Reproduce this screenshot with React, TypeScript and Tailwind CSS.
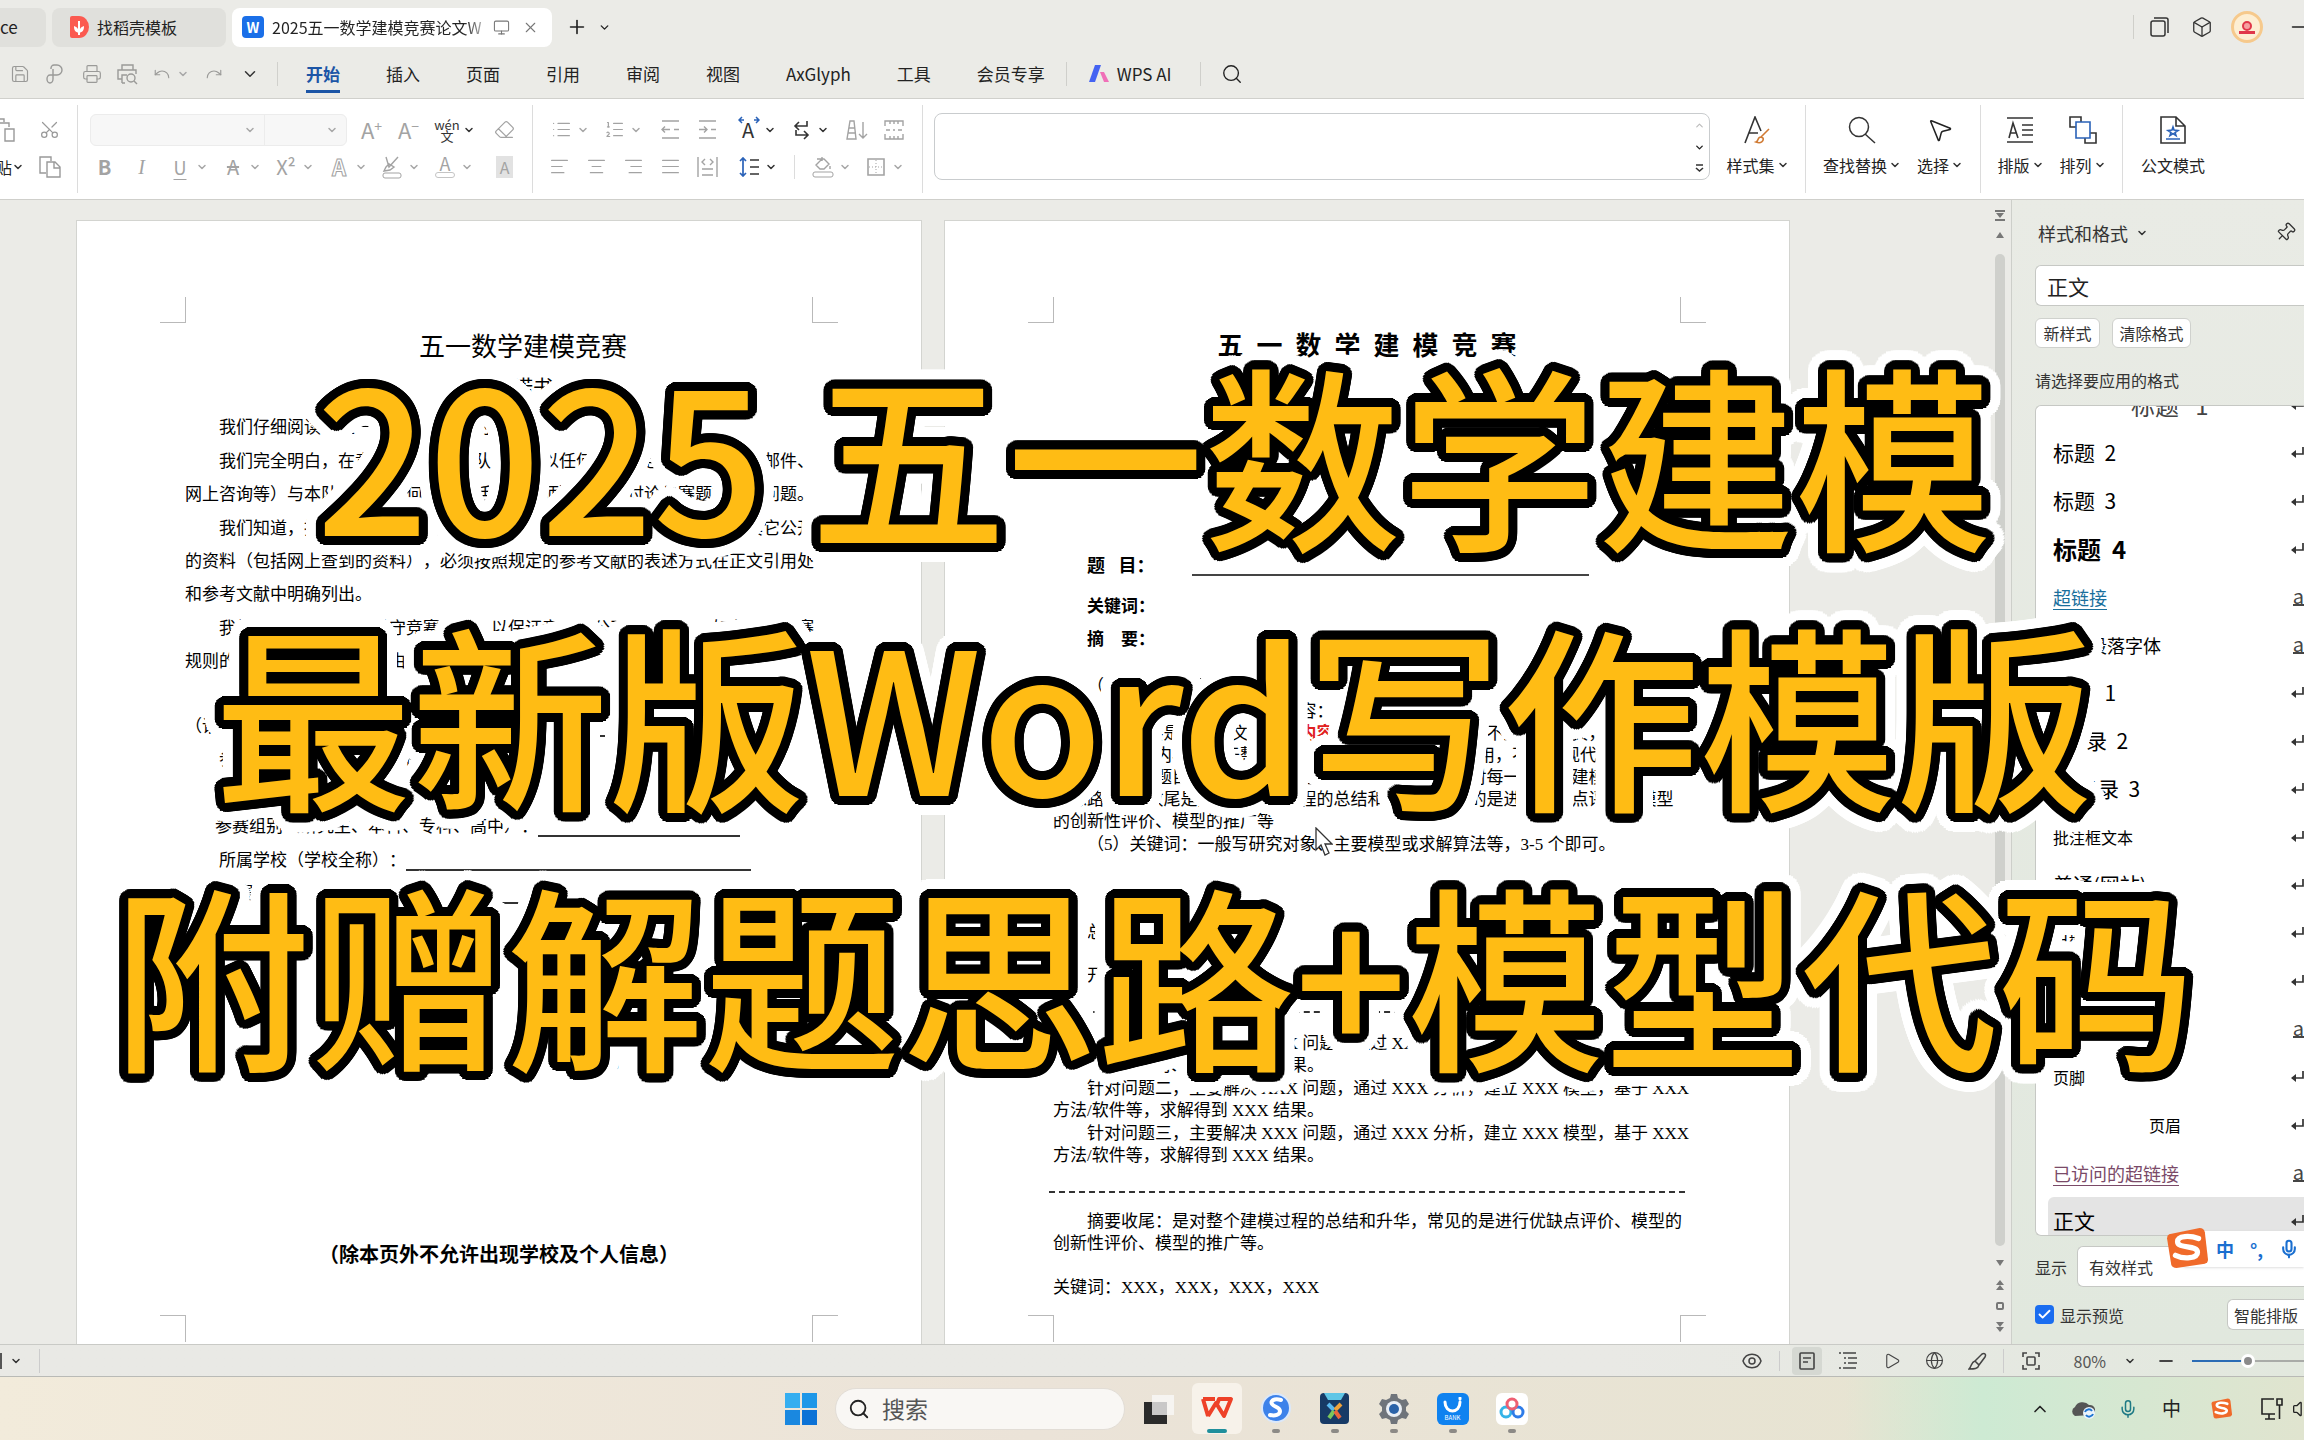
import type { ComponentType, ReactNode } from "react";
import {
  AlignCenter,
  AlignJustify,
  AlignLeft,
  AlignRight,
  Box,
  Check,
  ChevronDown,
  ChevronUp,
  Eraser,
  Globe,
  List,
  ListOrdered,
  Mic,
  Minus,
  Monitor,
  MousePointer2,
  Pin,
  Play,
  Plus,
  Printer,
  Redo,
  Save,
  Scissors,
  Search,
  Undo,
  Volume2,
  X,
} from "lucide-react";

type IconType = ComponentType<{ size?: number; strokeWidth?: number; className?: string }>;

function Caret({ dark = false }: { dark?: boolean }) {
  return (
    <ChevronDown
      size={12}
      strokeWidth={3}
      className={dark ? "shrink-0 text-[#333333]" : "shrink-0 text-[#a8a8a8]"}
      aria-hidden
    />
  );
}

/* ---------- title bar ---------- */

function TitleBar() {
  return (
    <div className="flex h-[50px] shrink-0 items-center pt-1">
      <button className="h-[39px] w-[46px] rounded-r-lg bg-[#e0e0dc] text-left text-[17px]">ce</button>
      <button className="ml-1.5 flex h-[39px] w-[174px] items-center gap-2 rounded-lg bg-[#e0e0dc] pl-[18px] text-base">
        <svg width="19" height="22" viewBox="0 0 19 22" aria-hidden>
          <path d="M2 0h7a10 11 0 0 1 0 22H2a2 2 0 0 1-2-2V2a2 2 0 0 1 2-2z" fill="#fb5a50" />
          <path d="M9 19V5" stroke="#fff" strokeWidth="2" />
          <path d="M9 17c-4-1-5-3-5-7 3 1 5 3 5 7 0-4 2-6 5-7 0 4-1 6-5 7z" fill="#fff" />
        </svg>
        找稻壳模板
      </button>
      <div className="ml-1.5 flex h-[39px] w-[320px] items-center rounded-lg bg-white pl-2.5 text-base">
        <span className="flex size-[22px] items-center justify-center rounded-sm bg-[#1a6fe8] text-sm font-bold text-white">W</span>
        <span className="ml-2 w-[213px] overflow-hidden whitespace-nowrap bg-gradient-to-r from-[#222222] from-90% to-[#cccccc] bg-clip-text text-transparent">
          2025五一数学建模竞赛论文W
        </span>
        <Monitor size={17} strokeWidth={1.5} className="ml-2 text-[#777777]" aria-hidden />
        <button aria-label="关闭" className="ml-3">
          <X size={17} strokeWidth={1.5} className="text-[#777777]" />
        </button>
      </div>
      <button aria-label="新建" className="ml-3.5">
        <Plus size={22} strokeWidth={1.8} />
      </button>
      <button aria-label="更多标签" className="ml-2.5">
        <ChevronDown size={13} strokeWidth={2.5} />
      </button>
      <div className="ml-auto flex items-center">
        <span className="mr-4 h-6 w-px bg-[#cfcfca]" />
        <svg width="20" height="20" viewBox="0 0 20 20" fill="none" stroke="#333" strokeWidth="1.5" aria-hidden>
          <rect x="1" y="4" width="14" height="15" rx="2" />
          <path d="M4 1h12a2 2 0 0 1 2 2v13" />
        </svg>
        <Box size={22} strokeWidth={1.4} className="ml-[21px] text-[#333333]" aria-hidden />
        <span className="ml-[18px] flex size-8 flex-col items-center justify-center rounded-full border-[3px] border-[#f6c98c] bg-[#fdeed3]">
          <span className="size-2.5 rounded-full border-2 border-[#e0374a] bg-[#f6a0a0]" />
          <span className="h-[3px] w-4 bg-[#e0374a]" />
        </span>
        <button aria-label="最小化" className="ml-[25px] w-4 overflow-hidden">
          <Minus size={22} strokeWidth={1.8} />
        </button>
      </div>
    </div>
  );
}

/* ---------- menu bar ---------- */

const menus = ["插入", "页面", "引用", "审阅", "视图", "AxGlyph", "工具", "会员专享"];

function MenuBar() {
  return (
    <nav className="flex h-[49px] shrink-0 items-center border-b border-[#d0d0cc] text-[17px] text-[#222222]">
      <div className="flex w-[277px] shrink-0 items-center text-[#9a9a98]">
        <button aria-label="保存" className="ml-2.5 w-9"><Save size={20} strokeWidth={1.4} /></button>
        <button aria-label="输出" className="w-9">
          <svg width="18" height="20" viewBox="0 0 18 20" fill="none" stroke="currentColor" strokeWidth="1.4">
            <path d="M5 5V4a3 3 0 0 1 3-3h3a5 5 0 0 1 0 10H4a3 4 0 1 0 3 4V5" />
          </svg>
        </button>
        <button aria-label="打印" className="w-[35px]"><Printer size={20} strokeWidth={1.4} /></button>
        <button aria-label="打印预览" className="w-9">
          <svg width="21" height="21" viewBox="0 0 21 21" fill="none" stroke="currentColor" strokeWidth="1.4">
            <path d="M5 6V1h11v5M5 15H1V6h18v4M5 19V11h5M8 19H5" />
            <circle cx="14" cy="14" r="4" />
            <path d="m17 17 3 3" />
          </svg>
        </button>
        <button aria-label="撤销" className="flex w-[52px] items-center gap-1.5">
          <Undo size={18} strokeWidth={1.5} />
          <Caret />
        </button>
        <button aria-label="恢复" className="w-9"><Redo size={18} strokeWidth={1.5} /></button>
        <button aria-label="自定义" className="text-[#333333]"><ChevronDown size={18} strokeWidth={2} /></button>
      </div>
      <span className="h-6 w-px bg-[#d0d0cc]" />
      <div className="flex items-center gap-[46px] pl-7">
        <a href="#start" className="relative font-bold text-[#1c55a6] after:absolute after:inset-x-0 after:-bottom-1.5 after:h-[3px] after:bg-[#1c55a6]">
          开始
        </a>
        {menus.map((name) => (
          <a key={name} href={`#${name}`}>{name}</a>
        ))}
      </div>
      <span className="ml-[21px] h-6 w-px bg-[#cfcfcb]" />
      <a href="#ai" className="ml-[22px] flex items-center gap-2">
        <svg width="20" height="18" viewBox="0 0 20 18" aria-hidden>
          <path d="M6 0h6L6 17H0z" fill="#4463f2" />
          <path d="M11 7h4l5 10h-5z" fill="#f070b8" />
        </svg>
        WPS AI
      </a>
      <span className="ml-7 h-6 w-px bg-[#cfcfcb]" />
      <button aria-label="搜索命令" className="ml-5">
        <Search size={22} strokeWidth={1.5} />
      </button>
    </nav>
  );
}

/* ---------- ribbon ---------- */

function Tool({ label, wide = false, dark = false, children }: { label: string; wide?: boolean; dark?: boolean; children: ReactNode }) {
  if (wide) {
    return (
      <button
        aria-label={label}
        className={`flex h-[37px] w-[53px] items-center ${dark ? "text-[#333333]" : "text-[#a3a3a3]"}`}
      >
        <span className="flex w-9 justify-center pl-1">{children}</span>
        <Caret dark={dark} />
      </button>
    );
  }
  return (
    <button aria-label={label} className="flex h-[37px] w-[37px] items-center justify-center text-[#a3a3a3]">
      {children}
    </button>
  );
}

function Glyph({ icon: Icon }: { icon: IconType }) {
  return <Icon size={21} strokeWidth={1.4} />;
}

function Indent({ out = false }: { out?: boolean }) {
  return (
    <svg width="19" height="19" viewBox="0 0 19 19" fill="none" stroke="currentColor" strokeWidth="1.4">
      <path d="M1 1h17M1 18h17M13 9.5h5" />
      <path d={out ? "M1 9.5h8M4 6.500l-3 3 3 3" : "M1 9.5h8M6 6.500l3 3-3 3"} />
    </svg>
  );
}

function BigButton({ label, caret = true, children }: { label: string; caret?: boolean; children: ReactNode }) {
  return (
    <button className="flex flex-col items-center gap-[7px] text-base text-[#222222]">
      <span className="flex h-8 items-center">{children}</span>
      <span className="flex items-center gap-0.5 whitespace-nowrap leading-6">
        {label}
        {caret && <Caret dark />}
      </span>
    </button>
  );
}

function Divider() {
  return <span className="mt-1.5 h-[88px] w-px shrink-0 bg-[#dcdcdc]" />;
}

function Ribbon() {
  return (
    <div className="flex h-[101px] shrink-0 border-b border-[#cfcfcb] bg-white">
      <div className="w-[77px] shrink-0 overflow-hidden pt-3">
        <div className="flex h-[37px] items-center justify-between pr-[17px] text-[#999999]">
          <svg width="15" height="24" viewBox="0 0 15 24" fill="none" stroke="currentColor" strokeWidth="1.4" aria-hidden>
            <path d="M0 1h4v3M0 5h9v4M5 11h9v12H5z" />
          </svg>
          <button aria-label="剪切"><Scissors size={21} strokeWidth={1.4} className="-rotate-90" /></button>
        </div>
        <div className="flex h-[37px] items-center justify-between pr-4">
          <button className="flex items-center text-base">
            <span className="flex w-3 justify-end overflow-hidden">贴</span>
            <Caret dark />
          </button>
          <button aria-label="复制" className="text-[#999999]">
            <svg width="22" height="22" viewBox="0 0 22 22" fill="none" stroke="currentColor" strokeWidth="1.4">
              <path d="M7 17H1V1h11v4M8 6h8l5 5v10H8zM15 6v6h6" />
            </svg>
          </button>
        </div>
      </div>
      <Divider />

      <div className="w-[454px] shrink-0 pt-3">
        <div className="flex items-center pl-3">
          <div className="mr-1.5 flex h-8 w-[257px] items-center rounded-md border border-[#ececec] bg-[#f7f7f7]">
            <select aria-label="字体" disabled className="h-full min-w-0 flex-1 appearance-none" />
            <Caret />
            <span className="ml-2 h-full w-px bg-[#ececec]" />
            <select aria-label="字号" disabled className="h-full w-[61px] appearance-none" />
            <Caret />
            <span className="w-2" />
          </div>
          <Tool label="增大字号"><span className="text-[22px]">A<sup className="text-sm">+</sup></span></Tool>
          <Tool label="减小字号"><span className="text-[22px]">A<sup className="text-sm">−</sup></span></Tool>
          <Tool label="拼音指南" wide dark>
            <span className="flex flex-col text-center text-[13px] leading-[11px]">
              <span>wén</span>
              <span>文</span>
            </span>
          </Tool>
          <span className="w-1.5" />
          <Tool label="清除格式"><Glyph icon={Eraser} /></Tool>
        </div>
        <div className="flex items-center pl-2">
          <Tool label="加粗"><span className="text-xl font-bold">B</span></Tool>
          <Tool label="倾斜"><span className="font-['Liberation_Serif'] text-xl italic">I</span></Tool>
          <Tool label="下划线" wide><span className="text-lg underline underline-offset-4">U</span></Tool>
          <Tool label="删除线" wide><span className="text-xl line-through">A</span></Tool>
          <Tool label="上标" wide><span className="text-xl">X²</span></Tool>
          <Tool label="文字效果" wide><span className="text-[22px] font-bold text-white [-webkit-text-stroke:1px_#a3a3a3]">A</span></Tool>
          <Tool label="突出显示" wide>
            <svg width="22" height="24" viewBox="0 0 22 24" fill="none" stroke="currentColor" strokeWidth="1.4">
              <path d="m5 2 3 10 9-10M5 12l3-3 5 3-4 3-6 1z" />
              <rect x="2" y="18" width="18" height="5" rx="2" strokeWidth="1" />
            </svg>
          </Tool>
          <Tool label="字体颜色" wide>
            <span className="flex flex-col items-center text-lg leading-[17px]">
              A<span className="h-1.5 w-5 rounded-sm border border-[#c4c4c4]" />
            </span>
          </Tool>
          <span className="w-2" />
          <Tool label="字符底纹"><span className="bg-[#e2e2e2] px-1 text-base leading-[22px]">A</span></Tool>
        </div>
      </div>
      <Divider />

      <div className="w-[389px] shrink-0 pt-3 pl-2">
        <div className="flex items-center">
          <Tool label="项目符号" wide><Glyph icon={List} /></Tool>
          <Tool label="编号" wide><Glyph icon={ListOrdered} /></Tool>
          <span className="w-[5px]" />
          <Tool label="减少缩进"><Indent out /></Tool>
          <Tool label="增加缩进"><Indent /></Tool>
          <span className="w-0.5" />
          <Tool label="中文版式" wide dark>
            <span className="relative text-xl">
              A
              <svg width="22" height="8" viewBox="0 0 22 8" fill="none" stroke="#2a62b8" strokeWidth="1.5" className="absolute -left-1 top-0">
                <path d="M6 4H1m3-3L1 4l3 3M16 4h5m-3-3 3 3-3 3" />
              </svg>
            </span>
          </Tool>
          <Tool label="换行标记" wide dark>
            <svg width="17" height="20" viewBox="0 0 17 20" fill="none" stroke="currentColor" strokeWidth="1.6">
              <path d="M14 1v5H2m4-4L2 6l4 4M3 10v5h12m-4-4 4 4-4 4" />
            </svg>
          </Tool>
          <span className="w-1" />
          <Tool label="排序">
            <svg width="22" height="20" viewBox="0 0 22 20" fill="none" stroke="currentColor" strokeWidth="1.4">
              <path d="M1 19 4 1h4l2 18zM3 8h6M2 13h8M17 2v16m-4-4 4 4 4-4" />
            </svg>
          </Tool>
          <Tool label="制表位">
            <svg width="20" height="20" viewBox="0 0 20 20" fill="none" stroke="currentColor" strokeWidth="1.4">
              <path d="M1 6V1h18v5M6 1v3M10 1v3M14 1v3M1 14v5h18v-5M6 19v-3M10 19v-3M14 19v-3M2 10h4m3 0h2m3 0h4" />
            </svg>
          </Tool>
        </div>
        <div className="flex items-center">
          <Tool label="左对齐"><Glyph icon={AlignLeft} /></Tool>
          <Tool label="居中"><Glyph icon={AlignCenter} /></Tool>
          <Tool label="右对齐"><Glyph icon={AlignRight} /></Tool>
          <Tool label="两端对齐"><Glyph icon={AlignJustify} /></Tool>
          <Tool label="分散对齐">
            <svg width="21" height="20" viewBox="0 0 21 20" fill="none" stroke="currentColor" strokeWidth="1.4">
              <path d="M1 0v20M20 0v20M5 18h11M5 12h11M8 2 5 5l3 3m5-6 3 3-3 3" />
            </svg>
          </Tool>
          <span className="w-[3px]" />
          <Tool label="行距" wide dark>
            <svg width="21" height="20" viewBox="0 0 21 20" fill="none" strokeWidth="1.7">
              <path d="M4 1v18M1 4l3-3 3 3M1 16l3 3 3-3" stroke="#2a62b8" />
              <path d="M11 3h9m-9 7h9m-9 7h9" stroke="#333" />
            </svg>
          </Tool>
          <span className="mr-2 ml-3 h-6 w-px bg-[#dcdcdc]" />
          <Tool label="底纹" wide>
            <svg width="22" height="22" viewBox="0 0 22 22" fill="none" stroke="currentColor" strokeWidth="1.4">
              <path d="M5 3h7l5 5-5 5H8L4 9l6-6M10 1v4M18 10v3" />
              <rect x="1" y="16" width="20" height="5" rx="2" strokeWidth="1" />
            </svg>
          </Tool>
          <Tool label="边框" wide>
            <svg width="18" height="18" viewBox="0 0 18 18" fill="none" stroke="currentColor" strokeWidth="1.6">
              <path d="M1 1h16v16H1z" />
              <path d="M9 2v14M2 9h14" strokeWidth="1" strokeDasharray="1 2" />
            </svg>
          </Tool>
        </div>
      </div>
      <Divider />

      <div className="mt-3.5 ml-[11px] flex h-[67px] min-w-0 flex-1 justify-end rounded-lg border border-[#c9ccce] py-1.5 pr-1">
        <div className="flex flex-col justify-between">
          <button aria-label="上一行"><ChevronUp size={11} strokeWidth={2.5} className="text-[#bbbbbb]" /></button>
          <button aria-label="下一行"><ChevronDown size={11} strokeWidth={3} /></button>
          <button aria-label="展开">
            <svg width="11" height="9" viewBox="0 0 11 9" fill="none" stroke="#333" strokeWidth="1.6">
              <path d="M2 1h7M2 4l3.500 3L9 4" />
            </svg>
          </button>
        </div>
      </div>

      <div className="flex w-[95px] shrink-0 justify-center pt-[15px]">
        <BigButton label="样式集">
          <svg width="27" height="28" viewBox="0 0 27 28" fill="none" strokeWidth="1.6" aria-hidden>
            <path d="M1 27 11 1l6 14M5 17h9" stroke="#333" />
            <path d="m25 13-8 8m0 0c-4 0-2 4-5 5 5 2 8-1 7-4z" stroke="#d07a33" />
          </svg>
        </BigButton>
      </div>
      <Divider />
      <div className="flex w-[174px] shrink-0 justify-center gap-4 pt-[15px]">
        <BigButton label="查找替换">
          <svg width="28" height="28" viewBox="0 0 28 28" fill="none" stroke="#333" strokeWidth="1.5" aria-hidden>
            <circle cx="11" cy="11" r="9.500" />
            <path d="m17 18 10 9" />
          </svg>
        </BigButton>
        <BigButton label="选择"><MousePointer2 size={28} strokeWidth={1.3} /></BigButton>
      </div>
      <Divider />
      <div className="flex w-[141px] shrink-0 justify-center gap-4 pt-[15px]">
        <BigButton label="排版">
          <svg width="28" height="26" viewBox="0 0 28 26" fill="none" stroke="#333" strokeWidth="1.6" aria-hidden>
            <path d="M1 1h26M1 25h26M3 21 7 6l5 15M4 16h7M16 8h11M16 13h11M16 18h11" />
          </svg>
        </BigButton>
        <BigButton label="排列">
          <svg width="28" height="28" viewBox="0 0 28 28" fill="none" strokeWidth="1.6" aria-hidden>
            <path d="M7 11H1V1h11v5M21 17h6v10H16v-5" stroke="#333" />
            <path d="M7 6h14v16H7z" stroke="#2a62b8" />
          </svg>
        </BigButton>
      </div>
      <Divider />
      <div className="flex w-[181px] shrink-0 pt-[15px] pl-[18px]">
        <BigButton label="公文模式" caret={false}>
          <svg width="26" height="28" viewBox="0 0 26 28" fill="none" strokeWidth="1.6" aria-hidden>
            <path d="M1 1h15l9 9v17H1zM16 1v9h9" stroke="#333" />
            <path d="m13 11 1 3 4 .5-3 2 1 3-3-2-3 2 1-3-3-2 4-.5zM6 23h14" stroke="#2a62b8" />
          </svg>
        </BigButton>
      </div>
    </div>
  );
}

/* ---------- document pages ---------- */

function Page({ children }: { children: ReactNode }) {
  return (
    <article className="flex h-[1196px] w-[846px] shrink-0 flex-col border border-[#d3d4d0] bg-white px-[83px] pt-[76px] text-[17px] text-black [text-spacing-trim:space-all]">
      <div className="flex justify-between">
        <span className="h-[26px] w-[26px] border-r border-b border-[#b9b9b9]" />
        <span className="h-[26px] w-[26px] border-b border-l border-[#b9b9b9]" />
      </div>
      <div className="h-[992px] shrink-0 px-[25px]">{children}</div>
      <div className="flex justify-between">
        <span className="h-[27px] w-[26px] border-t border-r border-[#b9b9b9]" />
        <span className="h-[27px] w-[26px] border-t border-l border-[#b9b9b9]" />
      </div>
    </article>
  );
}

function Blank({ className }: { className: string }) {
  return <span className={`mb-1 inline-block h-5 border-b-2 border-[#333333] align-bottom ${className}`} />;
}

function PledgePage() {
  return (
    <Page>
      <h2 className="pt-[3px] pb-[7px] pl-12 text-center text-[26px] leading-[38px]">五一数学建模竞赛</h2>
      <p className="mb-1.5 pl-12 text-center text-xl leading-8">承诺书</p>
      <div className="whitespace-nowrap leading-[33px]">
        <p className="mb-px pl-[34px]">我们仔细阅读了五一数学建模竞赛的竞赛规则。</p>
        <p className="mb-px">
          <span className="pl-[34px]">我们完全明白，在竞赛开始后参赛队员不能以任何方式（包括电话、电子邮件、</span>
          <br />
          网上咨询等）与本队以外的任何人（包括指导教师）研究、讨论与赛题有关的问题。
        </p>
        <p className="mb-px">
          <span className="pl-[34px]">我们知道，抄袭别人的成果是违反竞赛规则的，如果引用别人的成果或其它公开</span>
          <br />
          的资料（包括网上查到的资料），必须按照规定的参考文献的表述方式在正文引用处
          <br />
          和参考文献中明确列出。
        </p>
        <p className="mb-8">
          <span className="pl-[34px]">我们郑重承诺，严格遵守竞赛规则，以保证竞赛的公正、公平性。如有违反竞赛</span>
          <br />
          规则的行为，我们愿意承担由此引起的一切后果。
        </p>
        <p>（请从以下题目中选择一项填写）：<Blank className="w-[148px]" /></p>
        <p className="mb-px pl-[34px]">参赛题号（从组委会公布的赛题中选择）</p>
        <p className="pl-[34px]">参赛报名号：</p>
        <p className="mb-px pl-[30px]">参赛组别（研究生、本科、专科、高中）：<Blank className="w-[202px]" /></p>
        <p className="pl-[34px]">所属学校（学校全称）：<Blank className="w-[345px]" /></p>
        <p className="mb-px pl-[34px]">参赛队员：　队员姓名：<Blank className="w-[130px]" /></p>
        <p className="pl-[34px]">　　　　　　队员姓名：</p>
        <p className="mb-px pl-[34px]">　　　　　　联系方式：</p>
        <p className="mb-px pl-[34px]">　　　　　　联系电话：<Blank className="w-[90px]" /></p>
        <p className="mb-px text-center">　　</p>
        <p className="pl-[300px]">日期：　　年　月　　日</p>
      </div>
      <p className="mt-[161px] text-center text-xl leading-8 font-bold">（除本页外不允许出现学校及个人信息）</p>
    </Page>
  );
}

function AbstractPage() {
  return (
    <Page>
      <div className="font-['Liberation_Serif','Noto_Sans_CJK_SC',serif]">
        <h2 className="pt-[5px] text-center text-[26px] leading-[38px] font-bold whitespace-pre">五  一  数  学  建  模  竞  赛</h2>
        <div className="mt-[186px] pl-[34px] font-bold leading-[33px]">
          <p className="mb-2.5 flex items-center text-lg whitespace-pre">
            题   目：<span className="ml-[37px] h-5 w-[397px] border-b-2 border-[#444444]" />
          </p>
          <p>关键词：</p>
          <p className="whitespace-pre">摘    要：</p>
        </div>
        <div className="mt-5 leading-[22px] whitespace-nowrap">
          <p className="mb-[3px] pl-[34px]">（摘要写作说明）</p>
          <p className="pl-[34px]">（1）摘要写作的主要部分内容：</p>
          <p>
            <span className="pl-[34px]">（2）摘要是全篇论文，其中</span>
            <span className="font-bold text-[#e02020]">内容</span>必须做到简洁明了，不宜超过一页，一般
            <br />
            为论文的主要内容，对于整篇论文起到概括和总结性的作用，不要出现代码和公式
          </p>
          <p className="mb-px">
            简要介绍各问题目；（3）主体部分：逐一进行介绍，针对每一个问的建模求解过程
            <br />
            的思路（4）收尾是对整个建模过程的总结和升华，常见的是进行优缺点评价、模型
            <br />
            的创新性评价、模型的推广等
          </p>
          <p className="pl-[34px]">（5）关键词：一般写研究对象、主要模型或求解算法等，3-5 个即可。</p>
        </div>
        <p className="mt-[66px] pl-[34px] leading-[22px]">总体要求</p>
        <p className="mt-[21px] pl-[34px] leading-[22px]">开头段</p>
        <hr className="mt-6 mb-5 border-t-2 border-dashed border-[#333333]" />
        <div className="leading-[22px] whitespace-nowrap">
          {["一", "二", "三"].map((n) => (
            <p key={n} className="mb-px">
              <span className="pl-[34px]">针对问题{n}，主要解决 XXX 问题，通过 XXX 分析，建立 XXX 模型，基于 XXX</span>
              <br />
              方法/软件等，求解得到 XXX 结果。
            </p>
          ))}
        </div>
        <hr className="-mx-1 mt-6 mb-[18px] border-t-2 border-dashed border-[#333333]" />
        <div className="leading-[22px] whitespace-nowrap">
          <p>
            <span className="pl-[34px]">摘要收尾：是对整个建模过程的总结和升华，常见的是进行优缺点评价、模型的</span>
            <br />
            创新性评价、模型的推广等。
          </p>
          <p className="mt-[22px]">关键词：XXX，XXX，XXX，XXX</p>
        </div>
      </div>
    </Page>
  );
}

function Scrollbar() {
  return (
    <div className="flex w-[22px] shrink-0 flex-col items-center pt-2.5 pb-3 text-[#777777]" aria-hidden>
      <svg width="12" height="12" viewBox="0 0 12 12" fill="currentColor"><path d="M1 0h10v2H1zM6 8 2 3h8zM1 9h10v2H1z" /></svg>
      <svg width="8" height="6" viewBox="0 0 8 6" fill="currentColor" className="mt-2.5 mb-4"><path d="m4 0 4 6H0z" /></svg>
      <span className="w-2.5 flex-1 rounded-full bg-[#cfd0cc]" />
      <svg width="8" height="6" viewBox="0 0 8 6" fill="currentColor" className="mt-3.5"><path d="m4 6 4-6H0z" /></svg>
      <svg width="10" height="10" viewBox="0 0 10 10" fill="currentColor" className="mt-3.5"><path d="m5 0 4 5H1zM5 5l4 5H1z" /></svg>
      <span className="mt-3 size-2 rounded-xs border-2 border-[#777777]" />
      <svg width="10" height="10" viewBox="0 0 10 10" fill="currentColor" className="mt-3"><path d="m5 5 4-5H1zM5 10l4-5H1z" /></svg>
    </div>
  );
}

/* ---------- style panel ---------- */

const styles: { name: string; look: string; char?: boolean }[] = [
  { name: "标题   1", look: "pl-[78px] text-2xl text-[#444444]" },
  { name: "标题  2", look: "text-[21px]" },
  { name: "标题  3", look: "text-[21px]" },
  { name: "标题  4", look: "text-2xl font-bold" },
  { name: "超链接", look: "text-lg text-[#1a6f9c] underline underline-offset-4", char: true },
  { name: "默认段落字体", look: "text-lg", char: true },
  { name: "目录  1", look: "text-[21px]" },
  { name: "目录  2", look: "pl-3 text-[21px]" },
  { name: "目录  3", look: "pl-6 text-[21px]" },
  { name: "批注框文本", look: "text-base" },
  { name: "普通(网站)", look: "text-xl" },
  { name: "日期", look: "text-base" },
  { name: "题注", look: "text-base" },
  { name: "页码", look: "text-base", char: true },
  { name: "页脚", look: "text-base" },
  { name: "页眉", look: "pl-24 text-base" },
  { name: "已访问的超链接", look: "text-lg text-[#7a4a68] underline underline-offset-4", char: true },
];

function StyleMark({ char = false }: { char?: boolean }) {
  return char ? (
    <span className="border-b-2 border-[#444444] text-xl leading-4 text-[#444444]">a</span>
  ) : (
    <svg width="14" height="14" viewBox="0 0 14 14" fill="none" stroke="#333" strokeWidth="1.7" aria-hidden>
      <path d="M13 1v7H2" />
      <path d="M6 4 1 8l5 4z" fill="#333" stroke="none" />
    </svg>
  );
}

function StylePanel() {
  return (
    <aside className="flex w-[293px] shrink-0 flex-col overflow-hidden border-l border-[#cdcfca] bg-gradient-to-b from-[#e9ebe5] to-[#e1e8de] pl-[23px] text-base text-[#333333]">
      <div className="flex h-[65px] shrink-0 items-center pl-[3px] text-lg">
        样式和格式
        <span className="ml-2"><Caret dark /></span>
        <button aria-label="固定" className="mr-2 ml-auto"><Pin size={21} strokeWidth={1.5} className="rotate-45" /></button>
      </div>
      <input aria-label="当前样式" defaultValue="正文" className="h-[41px] shrink-0 rounded-l-md border border-r-0 border-[#c6c8c4] bg-white pl-[11px] text-[21px] text-[#222222]" />
      <div className="mt-3 flex gap-3">
        <button className="h-[30px] w-[65px] rounded-md border border-[#cfd1cd] bg-white">新样式</button>
        <button className="h-[30px] w-[79px] rounded-md border border-[#cfd1cd] bg-white">清除格式</button>
      </div>
      <p className="mt-5 leading-6">请选择要应用的格式</p>
      <div className="mt-[13px] flex min-h-0 flex-1 flex-col overflow-hidden rounded-l-md border border-r-0 border-[#c6c8c4] bg-white">
        <ul className="-mt-[25px] shrink-0 text-black">
          {styles.map((s) => (
            <li key={s.name} className="flex h-12 items-center justify-between pl-[17px]">
              <span className={`whitespace-pre ${s.look}`}>{s.name}</span>
              <StyleMark char={s.char} />
            </li>
          ))}
          <li className="ml-3 flex h-12 items-center justify-between rounded-tl-md bg-[#e4e4e4] pb-px pl-[5px] text-[21px]">
            正文
            <StyleMark />
          </li>
        </ul>
      </div>
      <div className="mt-2.5 flex shrink-0 items-center gap-2.5">
        <label htmlFor="shown">显示</label>
        <select id="shown" className="h-[41px] flex-1 appearance-none rounded-l-md border border-r-0 border-[#c6c8c4] bg-white pl-[11px]">
          <option>有效样式</option>
        </select>
      </div>
      <div className="mt-3 mb-3.5 flex shrink-0 items-center">
        <label className="flex items-center gap-1.5">
          <span className="relative flex">
            <input type="checkbox" defaultChecked className="size-[19px] appearance-none rounded-sm bg-[#1a6df0]" />
            <Check size={15} strokeWidth={3} className="pointer-events-none absolute top-0.5 left-0.5 text-white" />
          </span>
          显示预览
        </label>
        <button className="ml-auto h-[31px] w-[77px] rounded-l-md border border-r-0 border-[#c6c8c4] bg-white whitespace-nowrap">智能排版</button>
      </div>
    </aside>
  );
}

/* ---------- status bar and taskbar ---------- */

function StatusBar() {
  return (
    <footer className="flex h-8 shrink-0 items-center border-t border-[#c9cac6] bg-gradient-to-r from-[#e9e9e5] from-70% to-[#e2e8de] text-[#444444]">
      <span className="h-4 w-0.5 bg-[#555555]" />
      <button aria-label="页面设置" className="ml-2"><Caret dark /></button>
      <span className="ml-[17px] h-6 w-px bg-[#cccccc]" />
      <div className="ml-auto flex items-center">
        <svg width="20" height="16" viewBox="0 0 20 16" fill="none" stroke="currentColor" strokeWidth="1.5" aria-hidden>
          <path d="M1 8c3-9 15-9 18 0-3 9-15 9-18 0z" />
          <circle cx="10" cy="8" r="3" />
        </svg>
        <span className="mr-3 ml-[17px] h-5 w-px bg-[#cccccc]" />
        <button aria-label="页面视图" className="mr-[17px] flex h-7 w-[30px] items-center justify-center rounded-sm bg-[#d5d8d2]">
          <svg width="16" height="18" viewBox="0 0 16 18" fill="none" stroke="currentColor" strokeWidth="1.6">
            <rect x="1" y="1" width="14" height="16" rx="1" />
            <path d="M4 6h8M4 10h5" />
          </svg>
        </button>
        <svg width="18" height="17" viewBox="0 0 18 17" fill="none" stroke="currentColor" strokeWidth="1.6" className="mr-[26px]" aria-hidden>
          <path d="M0 1h2m2 0h13M5 6h2m2 0h9M5 11h2m2 0h9M0 16h2m2 0h13" />
        </svg>
        <Play size={18} strokeWidth={1.5} className="mr-6" />
        <Globe size={19} strokeWidth={1.5} className="mr-6" />
        <svg width="19" height="18" viewBox="0 0 19 18" fill="none" stroke="currentColor" strokeWidth="1.5" className="mr-4" aria-hidden>
          <path d="M7 9 14 2q2-1 3 0t0 3l-6 8zM7 9c-4 1-3 5-6 8 5 0 9 0 10-4z" />
        </svg>
        <span className="mr-[18px] h-6 w-px bg-[#cccccc]" />
        <svg width="18" height="18" viewBox="0 0 18 18" fill="none" stroke="currentColor" strokeWidth="1.6" className="mr-[34px]" aria-hidden>
          <path d="M1 5V1h4m8 0h4v4m0 8v4h-4m-8 0H1v-4" />
          <rect x="5" y="5" width="8" height="8" rx="1" />
        </svg>
        <span className="mr-[18px] text-base text-[#555555]">80%</span>
        <Caret dark />
        <button aria-label="缩小" className="ml-5"><Minus size={20} strokeWidth={2.5} /></button>
        <div className="ml-4 flex w-28 items-center">
          <input
            type="range"
            aria-label="缩放比例"
            defaultValue={50}
            className="h-0.5 w-full appearance-none bg-gradient-to-r from-[#2b6cb5] from-50% to-[#a9aba8] to-50% [&::-webkit-slider-thumb]:size-3.5 [&::-webkit-slider-thumb]:appearance-none [&::-webkit-slider-thumb]:rounded-full [&::-webkit-slider-thumb]:border-3 [&::-webkit-slider-thumb]:border-white [&::-webkit-slider-thumb]:bg-[#8a8a8a]"
          />
        </div>
      </div>
    </footer>
  );
}

function SogouMark({ size }: { size: number }) {
  return (
    <svg width={size} height={size} viewBox="0 0 40 40" aria-hidden>
      <path d="M3 7 32 1q4 0 5 4l3 26q0 3-3 4L10 39q-4 0-5-3L1 11q0-3 2-4z" fill="#f06a2a" />
      <path d="M31 11c-8-3-20-3-20 3 0 7 19 3 19 10 0 6-13 7-21 3" fill="none" stroke="#fff" strokeWidth="5" strokeLinecap="round" />
    </svg>
  );
}

function TaskApp({ label, children }: { label: string; children: ReactNode }) {
  return (
    <button aria-label={label} className="flex h-[51px] w-[59px] flex-col items-center justify-between pt-2.5 pb-px">
      {children}
      <span className="h-1 w-2 rounded-full bg-[#8c8a86]" />
    </button>
  );
}

function Taskbar() {
  return (
    <div className="flex h-16 shrink-0 items-center border-t border-[#b9bab6] bg-gradient-to-r from-[#f2ebdb] via-[#ebe3d8] via-45% to-[#e5e4cf]">
      <div className="flex flex-1 items-center pl-[785px]">
        <button aria-label="开始菜单">
          <svg width="32" height="32" viewBox="0 0 32 32" aria-hidden>
            <path d="M0 0h15v15H0z" fill="#35aef0" />
            <path d="M17 0h15v15H17z" fill="#1d97e8" />
            <path d="M0 17h15v15H0z" fill="#1a88e0" />
            <path d="M17 17h15v15H17z" fill="#0c72d6" />
          </svg>
        </button>
        <label className="ml-[18px] flex h-[42px] w-[290px] items-center rounded-full border border-[#e2ddd6] bg-[#f9f7f4] pl-3">
          <Search size={22} strokeWidth={2} />
          <input aria-label="搜索" placeholder="搜索" className="ml-3 w-40 text-[23px] placeholder:text-[#555555]" />
        </label>
        <span className="flex w-[67px] justify-center">
          <svg width="30" height="32" viewBox="0 0 30 32" aria-hidden>
            <path d="M0 9h23v22H0z" fill="#2b2b2b" />
            <path d="M8 2h22v20H8z" fill="#f6f4f1" />
            <path d="M8 9h15v13H8z" fill="#c9c8c8" />
          </svg>
        </span>
        <button aria-label="WPS Office" className="mr-1 flex h-[51px] w-[50px] flex-col items-center justify-between rounded-md bg-[#f7f2ea] pt-3.5 pb-px">
          <svg width="34" height="22" viewBox="0 0 34 22" aria-hidden>
            <path d="M3 2h12M8 19 3 2m5 17 8-13 8 13 7-17H19l-3 8" fill="none" stroke="#ee4128" strokeWidth="4" strokeLinejoin="round" />
          </svg>
          <span className="h-1 w-5 rounded-full bg-[#1f8f9c]" />
        </button>
        <TaskApp label="搜狗浏览器">
          <svg width="30" height="30" viewBox="0 0 30 30" aria-hidden>
            <circle cx="15" cy="15" r="14" fill="#3d82ea" stroke="#dbe8fa" strokeWidth="2" />
            <path d="M20 7c-7-2-11 1-9 4s8 3 8 7-5 5-10 4" fill="none" stroke="#fff" strokeWidth="4" strokeLinecap="round" />
          </svg>
        </TaskApp>
        <TaskApp label="图表">
          <svg width="29" height="31" viewBox="0 0 29 31" aria-hidden>
            <rect width="29" height="31" rx="4" fill="#173a66" />
            <path d="M4 0h21l-4 7H8z" fill="#5fc6e6" />
            <path d="m14 17-6-6" stroke="#59b8f0" strokeWidth="4" />
            <path d="m15 17 6-6" stroke="#f0a23a" strokeWidth="4" />
            <path d="m14 18-5 7" stroke="#7ac65b" strokeWidth="4" />
            <path d="m15 18 5 7" stroke="#e8663c" strokeWidth="4" />
          </svg>
        </TaskApp>
        <TaskApp label="设置">
          <svg width="32" height="32" viewBox="0 0 32 32" aria-hidden>
            <path d="M13 1h6l1 4 4 2 4-1 3 5-3 3v4l3 3-3 5-4-1-4 2-1 4h-6l-1-4-4-2-4 1-3-5 3-3v-4l-3-3 3-5 4 1 4-2z" fill="#6f747b" />
            <circle cx="16" cy="16" r="8" fill="#e9eef5" />
            <circle cx="16" cy="16" r="5" fill="#2a62a8" />
          </svg>
        </TaskApp>
        <TaskApp label="U BANK">
          <span className="flex size-8 flex-col items-center justify-center rounded-md bg-[#0f82f0]">
            <svg width="20" height="17" viewBox="0 0 20 17" fill="none" stroke="#fff" strokeWidth="3" strokeLinecap="round" aria-hidden>
              <path d="M2 5c0 12 15 12 15 0M17 1v1" />
            </svg>
            <span className="text-[6px] leading-[7px] text-white">BANK</span>
          </span>
        </TaskApp>
        <TaskApp label="网盘">
          <span className="flex size-8 items-center justify-center rounded-md bg-white">
            <svg width="26" height="26" viewBox="0 0 26 26" fill="none" strokeWidth="3" aria-hidden>
              <circle cx="7" cy="16" r="5" stroke="#35b4e8" />
              <circle cx="19" cy="16" r="5" stroke="#2f7ce8" />
              <circle cx="13" cy="8" r="5" stroke="#ee5f72" />
            </svg>
          </span>
        </TaskApp>
      </div>
      <div className="flex h-full w-[460px] items-center justify-end bg-gradient-to-r from-transparent via-[#cdead3] via-30% to-[#e0e4cf]">
        <ChevronUp size={20} strokeWidth={2} className="mr-5" />
        <svg width="26" height="20" viewBox="0 0 26 20" aria-hidden className="mr-[22px]">
          <path d="M5 17a5 5 0 0 1 0-9 8 7 0 0 1 14-2 5 5 0 0 1 2 10z" fill="#555" />
          <circle cx="19" cy="14" r="6" fill="#eaf3fb" />
          <path d="M15 13a4 4 0 0 1 7-1m1 3a4 4 0 0 1-7 1" fill="none" stroke="#1d74d0" strokeWidth="2" />
        </svg>
        <Mic size={20} strokeWidth={1.8} className="mr-6 text-[#1f7a85]" />
        <span className="mr-[30px] text-[19px]">中</span>
        <SogouMark size={21} />
        <svg width="24" height="22" viewBox="0 0 24 22" fill="none" stroke="#222" strokeWidth="1.6" className="ml-7" aria-hidden>
          <path d="M14 1H2v15h13M9 16v5M5 21h10M17 1h5v6h-5zM19.500 7v14" />
        </svg>
        <span className="ml-2 w-3 overflow-hidden"><Volume2 size={20} strokeWidth={1.6} /></span>
      </div>
    </div>
  );
}

/* ---------- things floating above the desktop ---------- */

const headline = ["2025 五一数学建模", "最新版Word写作模版", "附赠解题思路+模型代码"];

// A ring of hard shadows gives an outline with round corners.
function ring(radius: number, color: string, steps: number) {
  return Array.from({ length: steps }, (_, i) => {
    const a = (i / steps) * Math.PI * 2;
    return `${(Math.cos(a) * radius).toFixed(1)}px ${(Math.sin(a) * radius).toFixed(1)}px 0 ${color}`;
  });
}

const outline = [...ring(9, "#000", 32), ...ring(5, "#000", 16), ...ring(19, "#fff", 48), ...ring(14, "#fff", 32)].join(", ");

function Headline() {
  return (
    <h1
      className="pointer-events-none absolute inset-x-0 top-[320px] pl-1 text-center text-[197px] leading-[260px] font-medium whitespace-nowrap text-[#ffbc14]"
      style={{ textShadow: outline }}
    >
      {headline.map((line) => (
        <span key={line} className="block">{line}</span>
      ))}
    </h1>
  );
}

function ImeBar() {
  return (
    <div className="absolute right-0 bottom-[173px] flex h-9 w-[124px] items-center gap-4 rounded-l-md bg-white pl-9 text-[#1a6fd0] shadow">
      <span className="absolute -top-1 -left-3.5"><SogouMark size={42} /></span>
      <span className="text-lg font-bold">中</span>
      <span className="text-lg font-bold">°,</span>
      <Mic size={20} strokeWidth={2.5} />
    </div>
  );
}

export default function App() {
  return (
    <div className="relative flex h-screen min-h-[720px] w-full flex-col overflow-hidden bg-[#ebebe7] font-['Noto_Sans_CJK_SC','Noto_Sans',sans-serif] text-[#222222]">
      <TitleBar />
      <MenuBar />
      <Ribbon />
      <main className="flex min-h-0 flex-1">
        <div className="flex min-w-0 flex-1 items-start gap-[22px] overflow-hidden pt-5 pl-[76px]">
          <PledgePage />
          <AbstractPage />
        </div>
        <Scrollbar />
        <StylePanel />
      </main>
      <StatusBar />
      <Taskbar />
      <svg width="18" height="30" viewBox="0 0 18 30" className="absolute top-[827px] left-[1315px]" aria-hidden>
        <path d="M1 1v22l5-5 4 10 4-2-4-9h7z" fill="#fff" stroke="#333" strokeWidth="1.3" />
      </svg>
      <Headline />
      <ImeBar />
    </div>
  );
}
